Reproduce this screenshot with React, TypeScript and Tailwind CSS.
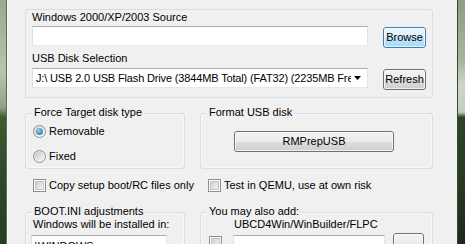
import React from "react";

const font = { fontFamily: '"Liberation Sans", Arial, sans-serif' };

function Btn({ children, focused, className = "" }: { children?: React.ReactNode; focused?: boolean; className?: string }) {
  return (
    <div
      className={
        "relative flex items-center justify-center rounded-[3px] border text-[11px] text-black " +
        (focused
          ? "border-[#3c7fb1] bg-[linear-gradient(#eaf6fd_0%,#d9f0fc_50%,#bee6fd_50%,#a7d9f5_100%)] "
          : "border-[#707070] bg-[linear-gradient(#f2f2f2_0%,#ebebeb_50%,#dddddd_50%,#cfcfcf_100%)] ") +
        className
      }
    >
      <div className="pointer-events-none absolute inset-0 rounded-[2px] border border-white/70" />
      <span className="relative">{children}</span>
    </div>
  );
}

function Input({ children, className = "" }: { children?: React.ReactNode; className?: string }) {
  return (
    <div
      className={
        "flex items-center overflow-hidden whitespace-nowrap border border-[#abadb3] border-l-[#dbdfe6] border-r-[#e2e3ea] border-b-[#e3e9ef] bg-white px-[3px] text-[11px] text-black " +
        className
      }
    >
      {children}
    </div>
  );
}

function Check({ className = "" }: { className?: string }) {
  return (
    <div className={"flex h-[13px] w-[13px] shrink-0 items-center justify-center border border-[#8f8f8f] bg-white " + className}>
      <div className="h-[9px] w-[9px] border border-[#c4c4c4] bg-[linear-gradient(135deg,#cfcfcf,#f4f4f4)]" />
    </div>
  );
}

function Radio({ on }: { on?: boolean }) {
  return (
    <div className="flex h-[13px] w-[13px] shrink-0 items-center justify-center rounded-full border border-[#8e8f8f] bg-[linear-gradient(135deg,#d6d6d6,#ffffff)]">
      {on ? (
        <div className="h-[7px] w-[7px] rounded-full bg-[radial-gradient(circle_at_40%_35%,#8fd5fa,#1c5a8a)]" />
      ) : (
        <div className="h-[9px] w-[9px] rounded-full bg-[linear-gradient(135deg,#c9c9c9,#f6f6f6)]" />
      )}
    </div>
  );
}

function Group({ title, className = "", children }: { title: string; className?: string; children?: React.ReactNode }) {
  return (
    <div className={"relative rounded-[3px] border border-[#d5dfe5] " + className}>
      <div className="pointer-events-none absolute inset-0 rounded-[3px] border border-white/60" />
      <div className="absolute left-[6px] top-[-8px] bg-[#f0f0f0] px-[2px] text-[11px] leading-[13px] text-black">
        {title}
      </div>
      {children}
    </div>
  );
}

export default function App() {
  return (
    <div className="flex h-[244px] w-[465px] overflow-hidden bg-[#f0f0f0]" style={font}>
      <div className="w-[6px] shrink-0 bg-[linear-gradient(to_bottom,#9aa88f_0%,#b9c4ad_30%,#8fa283_44%,#3f5c35_48%,#2f4a28_70%,#253d20_100%)]" />
      <div className="w-[1px] shrink-0 bg-[#5c6b56]" />
      <div className="w-[1px] shrink-0 bg-[#f8f8f8]" />
      <div className="flex min-w-0 flex-1 flex-col pl-[17px] pr-[24px] pt-[9px] text-[11px] text-black">
        {/* Top panel */}
        <div className="relative flex h-[89px] shrink-0 flex-col rounded-[3px] border border-[#d5dfe5] px-[6px]">
          <div className="mt-[1px] h-[13px] leading-[13px]">Windows 2000/XP/2003 Source</div>
          <div className="mt-[2px] flex items-start">
            <Input className="h-[20px] w-[337px]" />
            <Btn focused className="ml-[15px] mt-[1px] h-[21px] w-[43px]">Browse</Btn>
          </div>
          <div className="mt-[4px] h-[13px] leading-[13px]">USB Disk Selection</div>
          <div className="mt-[3px] flex items-start">
            <Input className="relative h-[20px] w-[337px]">
              <span className="tracking-[-0.15px]">J:\ USB 2.0 USB Flash Drive (3844MB Total) (FAT32) (2235MB Free)</span>
              <div className="absolute right-0 top-0 flex h-full w-[16px] items-center justify-start bg-white pl-[3px]">
                <svg width="7" height="4" viewBox="0 0 7 4"><path d="M0 0h7L3.5 4z" fill="#000" /></svg>
              </div>
            </Input>
            <Btn className="ml-[15px] mt-[1px] h-[21px] w-[43px]">Refresh</Btn>
          </div>
        </div>

        {/* Row 2 */}
        <div className="mt-[15px] flex shrink-0">
          <Group title="Force Target disk type" className="h-[56px] w-[160px]">
            <div className="flex flex-col pl-[7px] pt-[11px]">
              <div className="flex h-[13px] items-center gap-[3px]">
                <Radio on />
                <span className="leading-[13px]">Removable</span>
              </div>
              <div className="mt-[12px] flex h-[13px] items-center gap-[3px]">
                <Radio />
                <span className="leading-[13px]">Fixed</span>
              </div>
            </div>
          </Group>
          <Group title="Format USB disk" className="ml-[15px] h-[56px] flex-1">
            <div className="pl-[33px] pt-[17px]">
              <Btn className="h-[21px] w-[160px]">RMPrepUSB</Btn>
            </div>
          </Group>
        </div>

        {/* Checkboxes */}
        <div className="mt-[10px] flex h-[13px] shrink-0 items-center">
          <div className="flex w-[175px] items-center gap-[3px] pl-[8px]">
            <Check />
            <span className="leading-[13px]">Copy setup boot/RC files only</span>
          </div>
          <div className="flex items-center gap-[3px] pl-[8px]">
            <Check />
            <span className="leading-[13px]">Test in QEMU, use at own risk</span>
          </div>
        </div>

        {/* Row 4 */}
        <div className="mt-[20px] flex shrink-0">
          <Group title="BOOT.INI adjustments" className="h-[60px] w-[160px]">
            <div className="flex flex-col pl-[7px] pt-[5px]">
              <div className="h-[13px] leading-[13px]">Windows will be installed in:</div>
              <Input className="ml-[-2px] mt-[4px] h-[20px] w-[136px] items-start pt-[2px]">\WINDOWS</Input>
            </div>
          </Group>
          <Group title="You may also add:" className="ml-[15px] h-[60px] flex-1">
            <div className="flex flex-col pt-[5px]">
              <div className="ml-[33px] h-[13px] leading-[13px]">UBCD4Win/WinBuilder/FLPC</div>
              <div className="mt-[4px] flex items-start pl-[8px]">
                <Check className="mt-[1px]" />
                <Input className="ml-[11px] h-[20px] w-[152px]" />
                <Btn className="ml-[8px] mt-[-2px] h-[22px] w-[31px]" />
              </div>
            </div>
          </Group>
        </div>
      </div>
      <div className="w-[1px] shrink-0 bg-[#3a4636]" />
      <div className="w-[7px] shrink-0 bg-[linear-gradient(to_bottom,#8d9c80_0%,#a8b59c_25%,#cfd6c8_35%,#c3cbbb_46%,#2d4526_48%,#283c22_70%,#1d2b1a_100%)]" />
    </div>
  );
}
